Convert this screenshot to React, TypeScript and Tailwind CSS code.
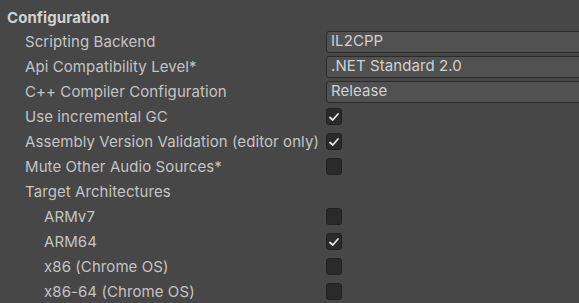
import React from "react";

type Row =
  | { label: string; kind: "select"; value: string }
  | { label: string; kind: "check"; checked: boolean; indent?: boolean }
  | { label: string; kind: "label" };

const rows: Row[] = [
  { label: "Scripting Backend", kind: "select", value: "IL2CPP" },
  { label: "Api Compatibility Level*", kind: "select", value: ".NET Standard 2.0" },
  { label: "C++ Compiler Configuration", kind: "select", value: "Release" },
  { label: "Use incremental GC", kind: "check", checked: true },
  { label: "Assembly Version Validation (editor only)", kind: "check", checked: true },
  { label: "Mute Other Audio Sources*", kind: "check", checked: false },
  { label: "Target Architectures", kind: "label" },
  { label: "ARMv7", kind: "check", checked: false, indent: true },
  { label: "ARM64", kind: "check", checked: true, indent: true },
  { label: "x86 (Chrome OS)", kind: "check", checked: false, indent: true },
  { label: "x86-64 (Chrome OS)", kind: "check", checked: false, indent: true },
];

const Checkbox = ({ checked }: { checked: boolean }) => (
  <div className="w-[16px] h-[17px] rounded-[3px] bg-[#2a2a2a] border border-[#212121] flex items-center justify-center">
    {checked && (
      <svg width="12" height="12" viewBox="0 0 12 12">
        <path d="M2 6.5 L4.8 9 L10 3" fill="none" stroke="#e6e6e6" strokeWidth="1.8" strokeLinecap="round" strokeLinejoin="round" />
      </svg>
    )}
  </div>
);

export default function App() {
  return (
    <div
      className="w-[579px] h-[303px] overflow-hidden bg-[#474747] text-[#c4c4c4] text-[15px] tracking-[0.08px] pt-[4px]"
      style={{ fontFamily: "Inter, 'Noto Sans', sans-serif" }}
    >
      <div className="h-[25px] flex items-center pt-[3px] pl-[7px] font-bold text-[#d2d2d2]">Configuration</div>
      {rows.map((r) => (
        <div key={r.label} className="h-[25px] flex items-center">
          <div className={`w-[326px] shrink-0 whitespace-nowrap pt-[1px] ${"indent" in r && r.indent ? "pl-[44px]" : "pl-[25px]"}`}>
            {r.label}
          </div>
          {r.kind === "select" && (
            <div className="w-[270px] shrink-0 h-[22px] rounded-[3px] bg-[#515151] border border-[#2b2b2b] flex items-center pl-[4px] text-[#d0d0d0]">
              {r.value}
            </div>
          )}
          {r.kind === "check" && <Checkbox checked={r.checked} />}
        </div>
      ))}
    </div>
  );
}
